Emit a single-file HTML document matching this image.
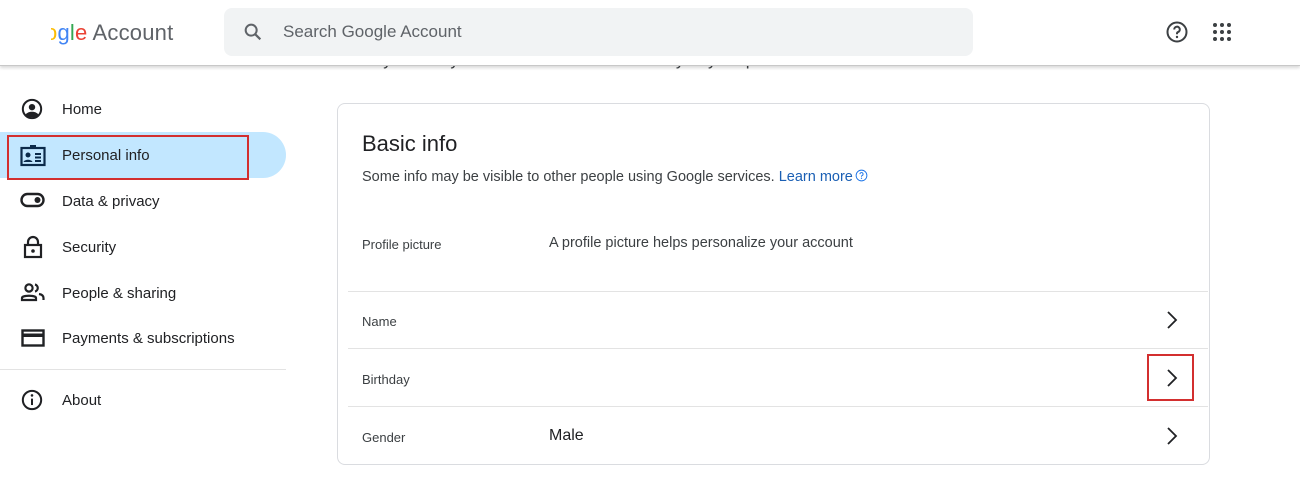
<!DOCTYPE html><html><head><style>
body{margin:0;width:1300px;height:480px;overflow:hidden;background:#fff;font-family:"Liberation Sans",Arial,sans-serif;color:#202124;position:relative}
.a{position:absolute}
.hdr{left:0;top:0;width:1300px;height:65px;background:#fff;border-bottom:1px solid #c8c8c8;box-shadow:0 2px 3px rgba(0,0,0,.15);z-index:2}
.nav{font-size:15px;color:#202124}
.lbl{font-size:13px;color:#3c4043}
.hr{height:1px;background:#e3e3e3}
</style></head><body>
<div class="a" style="left:336px;top:50px;font-size:17px;color:#3c4043">reach you easily. You can also see a summary of your profiles.</div>
<div class="a hdr">
 <div class="a" style="left:45px;top:20px;font-size:22px;letter-spacing:0.2px"><span style="color:#fbbc04">o</span><span style="color:#4285f4">g</span><span style="color:#34a853">l</span><span style="color:#ea4335">e</span> <span style="color:#5f6368">Account</span></div>
 <div class="a" style="left:40px;top:15px;width:11px;height:35px;background:#fff"></div>
 <div class="a" style="left:224px;top:8px;width:749px;height:48px;background:#f1f3f4;border-radius:8px">
  <svg class="a" style="left:18px;top:13px" width="22" height="22" viewBox="0 0 24 24"><circle cx="10" cy="10" r="6" fill="none" stroke="#5f6368" stroke-width="2.2"/><path d="M14.5 14.5L20 20" stroke="#5f6368" stroke-width="2.4"/></svg>
  <div class="a" style="left:59px;top:14px;font-size:17px;color:#5f6368">Search Google Account</div>
 </div>
 <svg class="a" style="left:1165px;top:20px" width="24" height="24" viewBox="0 0 24 24"><circle cx="12" cy="12" r="9.5" fill="none" stroke="#3c4043" stroke-width="2"/><path d="M9.2 9.5a2.8 2.8 0 1 1 3.8 2.6c-.7.3-1 .8-1 1.6v.6" fill="none" stroke="#3c4043" stroke-width="2"/><circle cx="12" cy="17" r="1.2" fill="#3c4043"/></svg>
 <svg class="a" style="left:1212px;top:22px" width="20" height="20" viewBox="0 0 20 20" fill="#3c4043"><circle cx="3" cy="3" r="2"/><circle cx="10" cy="3" r="2"/><circle cx="17" cy="3" r="2"/><circle cx="3" cy="10" r="2"/><circle cx="10" cy="10" r="2"/><circle cx="17" cy="10" r="2"/><circle cx="3" cy="17" r="2"/><circle cx="10" cy="17" r="2"/><circle cx="17" cy="17" r="2"/></svg>
</div>
<div class="a" style="left:0;top:132px;width:286px;height:46px;background:#c2e7ff;border-radius:0 23px 23px 0"></div>
<div class="a" style="left:7px;top:135px;width:238px;height:41px;border:2px solid #d32f2f"></div>
<svg class="a" style="left:21px;top:98px" width="22" height="22" viewBox="0 0 24 24"><circle cx="12" cy="12" r="10" fill="none" stroke="#202124" stroke-width="2.2"/><circle cx="12" cy="10" r="3.5" fill="#202124"/><path d="M5 18c3-4 11-4 14 0l-3 3H8z" fill="#202124"/></svg>
<svg class="a" style="left:20px;top:145px" width="26" height="22" viewBox="0 0 26 22"><rect x="1.5" y="3" width="23" height="17" fill="none" stroke="#0b2a4a" stroke-width="2.2"/><rect x="10" y="0" width="6" height="4" fill="#0b2a4a"/><circle cx="8" cy="10" r="2.5" fill="#0b2a4a"/><path d="M3.5 17c1-3 8-3 9 0z" fill="#0b2a4a"/><path d="M15 9h6M15 12.5h6M15 16h6" stroke="#0b2a4a" stroke-width="2"/></svg>
<svg class="a" style="left:20px;top:192px" width="26" height="16" viewBox="0 0 26 16"><rect x="1.5" y="2" width="22" height="12" rx="6" fill="none" stroke="#202124" stroke-width="2.4"/><circle cx="17.5" cy="8" r="3" fill="#202124"/></svg>
<svg class="a" style="left:23px;top:235px" width="20" height="24" viewBox="0 0 20 24"><path d="M5 10V7a5 5 0 0 1 10 0v3" fill="none" stroke="#202124" stroke-width="2.2"/><rect x="2" y="10" width="16" height="12" fill="none" stroke="#202124" stroke-width="2.2"/><circle cx="10" cy="16" r="1.8" fill="#202124"/></svg>
<svg class="a" style="left:20px;top:282px" width="26" height="20" viewBox="0 0 26 20"><circle cx="9" cy="6" r="3.6" fill="none" stroke="#202124" stroke-width="2.2"/><path d="M2 18v-2c0-3 14-3 14 0v2z" fill="none" stroke="#202124" stroke-width="2.2"/><path d="M15 2.5a3.6 3.6 0 0 1 0 7M19 12c3 .5 4.5 2 4.5 4v2" fill="none" stroke="#202124" stroke-width="2.2"/></svg>
<svg class="a" style="left:21px;top:329px" width="24" height="18" viewBox="0 0 24 18"><rect x="1.5" y="1.5" width="21" height="15" fill="none" stroke="#202124" stroke-width="2.4"/><rect x="1.5" y="4.5" width="21" height="3.5" fill="#202124"/></svg>
<svg class="a" style="left:21px;top:389px" width="22" height="22" viewBox="0 0 24 24"><circle cx="12" cy="12" r="10" fill="none" stroke="#202124" stroke-width="2.2"/><path d="M12 10.5v7" stroke="#202124" stroke-width="2.2"/><circle cx="12" cy="7" r="1.4" fill="#202124"/></svg>
<div class="a nav" style="left:62px;top:101px">Home</div>
<div class="a nav" style="left:62px;top:147px">Personal info</div>
<div class="a nav" style="left:62px;top:193px">Data &amp; privacy</div>
<div class="a nav" style="left:62px;top:239px">Security</div>
<div class="a nav" style="left:62px;top:285px">People &amp; sharing</div>
<div class="a nav" style="left:62px;top:330px">Payments &amp; subscriptions</div>
<div class="a hr" style="left:0;top:369px;width:286px"></div>
<div class="a nav" style="left:62px;top:392px">About</div>
<div class="a" style="left:337px;top:103px;width:871px;height:360px;border:1px solid #dadce0;border-radius:8px"></div>
<div class="a" style="left:362px;top:131px;font-size:22px;color:#202124">Basic info</div>
<div class="a" style="left:362px;top:169px;font-size:14.5px;color:#3c4043">Some info may be visible to other people using Google services. <span style="color:#1a5fb4">Learn more</span><svg width="13" height="13" viewBox="0 0 14 14" style="vertical-align:-1px;margin-left:2px"><circle cx="7" cy="7" r="5.8" fill="none" stroke="#1a73e8" stroke-width="1"/><path d="M5.3 5.5a1.7 1.7 0 1 1 2.3 1.6c-.4.2-.6.5-.6.9v.4" fill="none" stroke="#1a73e8" stroke-width="1"/><circle cx="7" cy="10" r=".7" fill="#1a73e8"/></svg></div>
<div class="a lbl" style="left:362px;top:237px">Profile picture</div>
<div class="a" style="left:549px;top:235px;font-size:14.5px;color:#3c4043">A profile picture helps personalize your account</div>
<div class="a hr" style="left:348px;top:291px;width:860px"></div>
<div class="a lbl" style="left:362px;top:314px">Name</div>
<div class="a hr" style="left:348px;top:348px;width:860px"></div>
<div class="a lbl" style="left:362px;top:372px">Birthday</div>
<div class="a hr" style="left:348px;top:406px;width:860px"></div>
<div class="a lbl" style="left:362px;top:430px">Gender</div>
<div class="a" style="left:549px;top:427px;font-size:16px;color:#202124">Male</div>
<svg class="a" style="left:1162px;top:309px" width="18" height="22" viewBox="0 0 18 22"><path d="M6 3l8 8-8 8" fill="none" stroke="#202124" stroke-width="1.8"/></svg>
<svg class="a" style="left:1162px;top:367px" width="18" height="22" viewBox="0 0 18 22"><path d="M6 3l8 8-8 8" fill="none" stroke="#202124" stroke-width="1.8"/></svg>
<svg class="a" style="left:1162px;top:425px" width="18" height="22" viewBox="0 0 18 22"><path d="M6 3l8 8-8 8" fill="none" stroke="#202124" stroke-width="1.8"/></svg>
<div class="a" style="left:1147px;top:354px;width:43px;height:43px;border:2px solid #d32f2f"></div>
</body></html>
